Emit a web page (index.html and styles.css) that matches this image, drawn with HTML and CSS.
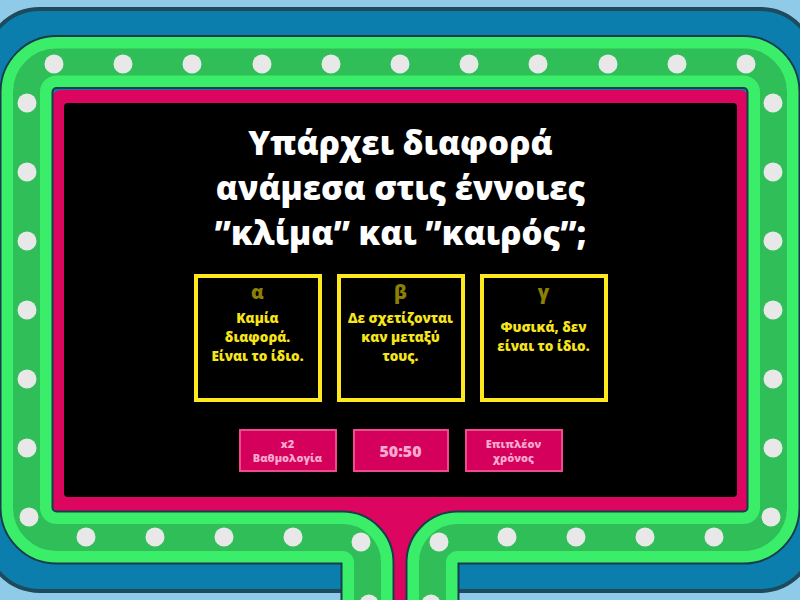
FILE: index.html
```html
<!DOCTYPE html>
<html lang="el">
<head>
<meta charset="utf-8">
<title>Quiz</title>
<link rel="stylesheet" href="styles.css">
</head>
<body>
<div class="stage">
  <svg class="frame" viewBox="0 0 800 600" width="800" height="600" aria-hidden="true">
    <defs>
      <path id="band" d="M367.5 620 L367.5 562.5 A25 25 0 0 0 342.5 537.5 L56.5 537.5 A30 30 0 0 1 26.5 507.5 L26.5 92 A30 30 0 0 1 56.5 62 L743.5 62 A30 30 0 0 1 773.5 92 L773.5 507.5 A30 30 0 0 1 743.5 537.5 L457.5 537.5 A25 25 0 0 0 432.5 562.5 L432.5 620"/>
    </defs>
    <rect x="-15" y="9" width="830" height="582" rx="55" fill="#0b7eae" stroke="#1f4a5c" stroke-width="4"/>
    <rect x="51" y="90" width="699" height="422" rx="10" fill="#dc0660"/>
    <rect x="350" y="500" width="100" height="110" fill="#dc0660"/>
    <g fill="none" stroke-linejoin="round">
      <use href="#band" stroke="#173c4a" stroke-width="54"/>
      <use href="#band" stroke="#3aee69" stroke-width="50"/>
      <use href="#band" stroke="#2fbe57" stroke-width="27"/>
    </g>
    <g fill="#e8e8e8">
      <circle cx="54" cy="64" r="9.5"/><circle cx="123" cy="64" r="9.5"/><circle cx="192" cy="64" r="9.5"/>
      <circle cx="262" cy="64" r="9.5"/><circle cx="331" cy="64" r="9.5"/><circle cx="400" cy="64" r="9.5"/>
      <circle cx="469" cy="64" r="9.5"/><circle cx="538" cy="64" r="9.5"/><circle cx="608" cy="64" r="9.5"/>
      <circle cx="677" cy="64" r="9.5"/><circle cx="746" cy="64" r="9.5"/>
      <circle cx="27" cy="103" r="9.5"/><circle cx="27" cy="172" r="9.5"/><circle cx="27" cy="241" r="9.5"/>
      <circle cx="27" cy="310" r="9.5"/><circle cx="27" cy="379" r="9.5"/><circle cx="27" cy="448" r="9.5"/>
      <circle cx="29" cy="517" r="9.5"/>
      <circle cx="773" cy="103" r="9.5"/><circle cx="773" cy="172" r="9.5"/><circle cx="773" cy="241" r="9.5"/>
      <circle cx="773" cy="310" r="9.5"/><circle cx="773" cy="379" r="9.5"/><circle cx="773" cy="448" r="9.5"/>
      <circle cx="771" cy="517" r="9.5"/>
      <circle cx="86" cy="537" r="9.5"/><circle cx="155" cy="537" r="9.5"/><circle cx="224" cy="537" r="9.5"/>
      <circle cx="293" cy="537" r="9.5"/><circle cx="361" cy="542" r="9.5"/>
      <circle cx="439" cy="542" r="9.5"/><circle cx="507" cy="537" r="9.5"/><circle cx="576" cy="537" r="9.5"/>
      <circle cx="645" cy="537" r="9.5"/><circle cx="714" cy="537" r="9.5"/>
      <circle cx="369" cy="604" r="9.5"/><circle cx="431" cy="604" r="9.5"/>
    </g>
  </svg>
  <main class="screen">
    <h1 class="question">Υπάρχει διαφορά<br>ανάμεσα στις έννοιες<br>”κλίμα” και ”καιρός”;</h1>
    <div class="answers">
      <div class="answer">
        <div class="label">α</div>
        <div class="text">Καμία<br>διαφορά.<br>Είναι το ίδιο.</div>
      </div>
      <div class="answer">
        <div class="label">β</div>
        <div class="text">Δε σχετίζονται<br>καν μεταξύ<br>τους.</div>
      </div>
      <div class="answer">
        <div class="label">γ</div>
        <div class="text">Φυσικά, δεν<br>είναι το ίδιο.</div>
      </div>
    </div>
    <div class="powerups">
      <button class="power">x2<br>Βαθμολογία</button>
      <button class="power big">50:50</button>
      <button class="power">Επιπλέον<br>χρόνος</button>
    </div>
  </main>
</div>
</body>
</html>
```

FILE: styles.css
```css
* { box-sizing: border-box; }
html, body { margin: 0; padding: 0; }
body {
  background: #8fcbe8;
  font-family: "Open Sans", "Noto Sans", "DejaVu Sans", sans-serif;
}
.stage {
  position: relative;
  width: 800px;
  height: 600px;
  overflow: hidden;
  background: #8fcbe8;
  padding: 103px 63px 0 64px;
}
.frame {
  position: absolute;
  left: 0;
  top: 0;
  z-index: 0;
}
.screen {
  position: relative;
  z-index: 1;
  width: 673px;
  height: 394px;
  background: #000;
  border-radius: 4px;
  display: flex;
  flex-direction: column;
  align-items: center;
  padding-top: 17px;
}
.question {
  margin: 0;
  font-size: 33px;
  line-height: 45px;
  font-weight: 800;
  color: #fff;
  text-align: center;
}
.answers {
  display: flex;
  gap: 15px;
  margin-top: 19px;
}
.answer {
  width: 128px;
  height: 128px;
  border: 4px solid #fde91c;
  display: flex;
  flex-direction: column;
  align-items: center;
}
.label {
  height: 28px;
  line-height: 28px;
  font-size: 19px;
  font-weight: 800;
  color: #8b7f05;
}
.text {
  height: 62px;
  display: flex;
  align-items: center;
  justify-content: center;
  text-align: center;
  font-size: 13.5px;
  line-height: 19px;
  font-weight: 800;
  color: #f7e51b;
}
.powerups {
  display: flex;
  gap: 16px;
  margin-top: 27px;
}
.power {
  width: 98px;
  height: 43px;
  padding: 0;
  background: #d5005b;
  border: 2px solid #ee4a8d;
  color: #f8a9cf;
  font-family: inherit;
  font-weight: 800;
  font-size: 11px;
  line-height: 14px;
}
.power.big {
  width: 96px;
  font-size: 16px;
}
```
